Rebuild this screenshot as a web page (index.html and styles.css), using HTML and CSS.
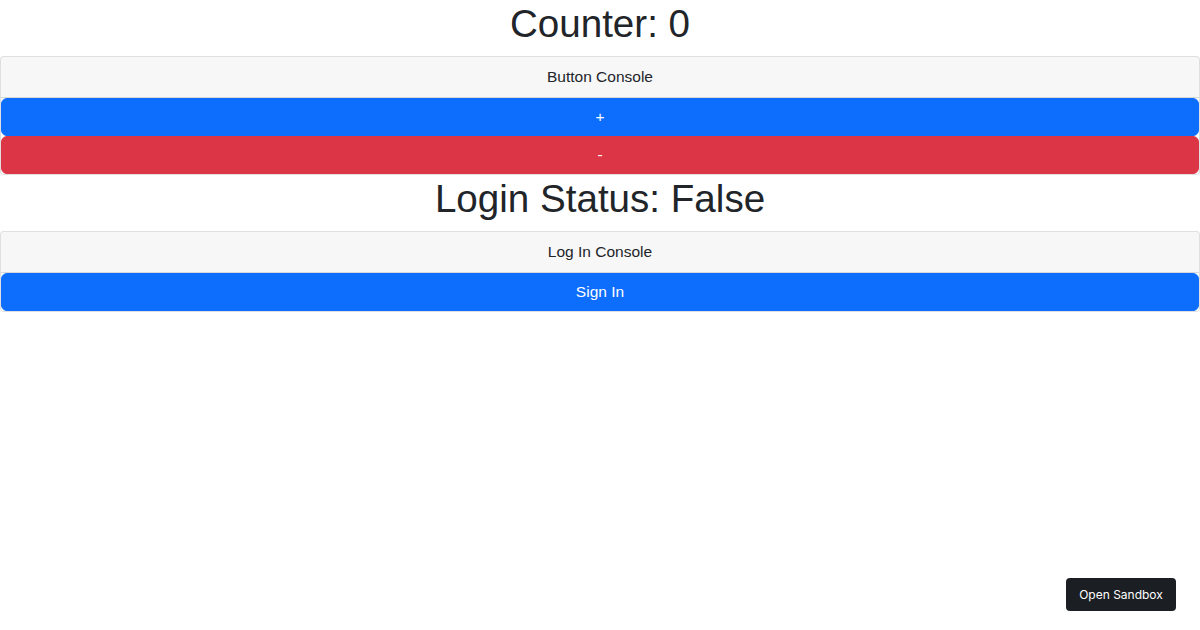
FILE: index.html
```html
<!DOCTYPE html>
<html>
<head>
<meta charset="utf-8">
<link rel="stylesheet" href="styles.css">
</head>
<body>
<div class="app">
  <h1 class="title">Counter: 0</h1>
  <div class="card">
    <div class="card-header">Button Console</div>
    <button class="btn btn-primary">+</button>
    <button class="btn btn-danger">-</button>
  </div>
  <h1 class="title">Login Status: False</h1>
  <div class="card">
    <div class="card-header">Log In Console</div>
    <button class="btn btn-primary">Sign In</button>
  </div>
</div>
<a class="sandbox-btn">Open Sandbox</a>
</body>
</html>
```
FILE: styles.css
```css
* { box-sizing: border-box; }
html, body { margin: 0; padding: 0; }
body {
  font-family: "Liberation Sans", Arial, sans-serif;
  font-size: 15.5px;
  line-height: 24px;
  color: #212529;
  background: #fff;
}
.app { text-align: center; }
.title {
  margin: 0 0 8px;
  font-size: 38.6px;
  font-weight: 500;
  line-height: 48px;
}
.card {
  display: flex;
  flex-direction: column;
  border: 1px solid rgba(0,0,0,.125);
  border-radius: 4px;
  background: #fff;
}
.card-header {
  padding: 8px 16px;
  background: rgba(0,0,0,.03);
  border-bottom: 1px solid rgba(0,0,0,.125);
  border-radius: 3px 3px 0 0;
}
.btn {
  display: block;
  width: 100%;
  padding: 6px 12px;
  font-family: inherit;
  font-size: 15.5px;
  line-height: 24px;
  color: #fff;
  border: 1px solid transparent;
  border-radius: 6px;
  cursor: pointer;
  text-align: center;
}
.btn-primary { background: #0d6efd; border-color: #0d6efd; }
.btn-danger { background: #dc3545; border-color: #dc3545; }
.sandbox-btn {
  position: fixed;
  right: 24px;
  bottom: 19px;
  width: 110px;
  height: 33px;
  display: flex;
  align-items: center;
  justify-content: center;
  background: #1b1f23;
  color: #fff;
  font-family: "Inter", "Liberation Sans", sans-serif;
  font-size: 12px;
  border-radius: 4px;
}
```
